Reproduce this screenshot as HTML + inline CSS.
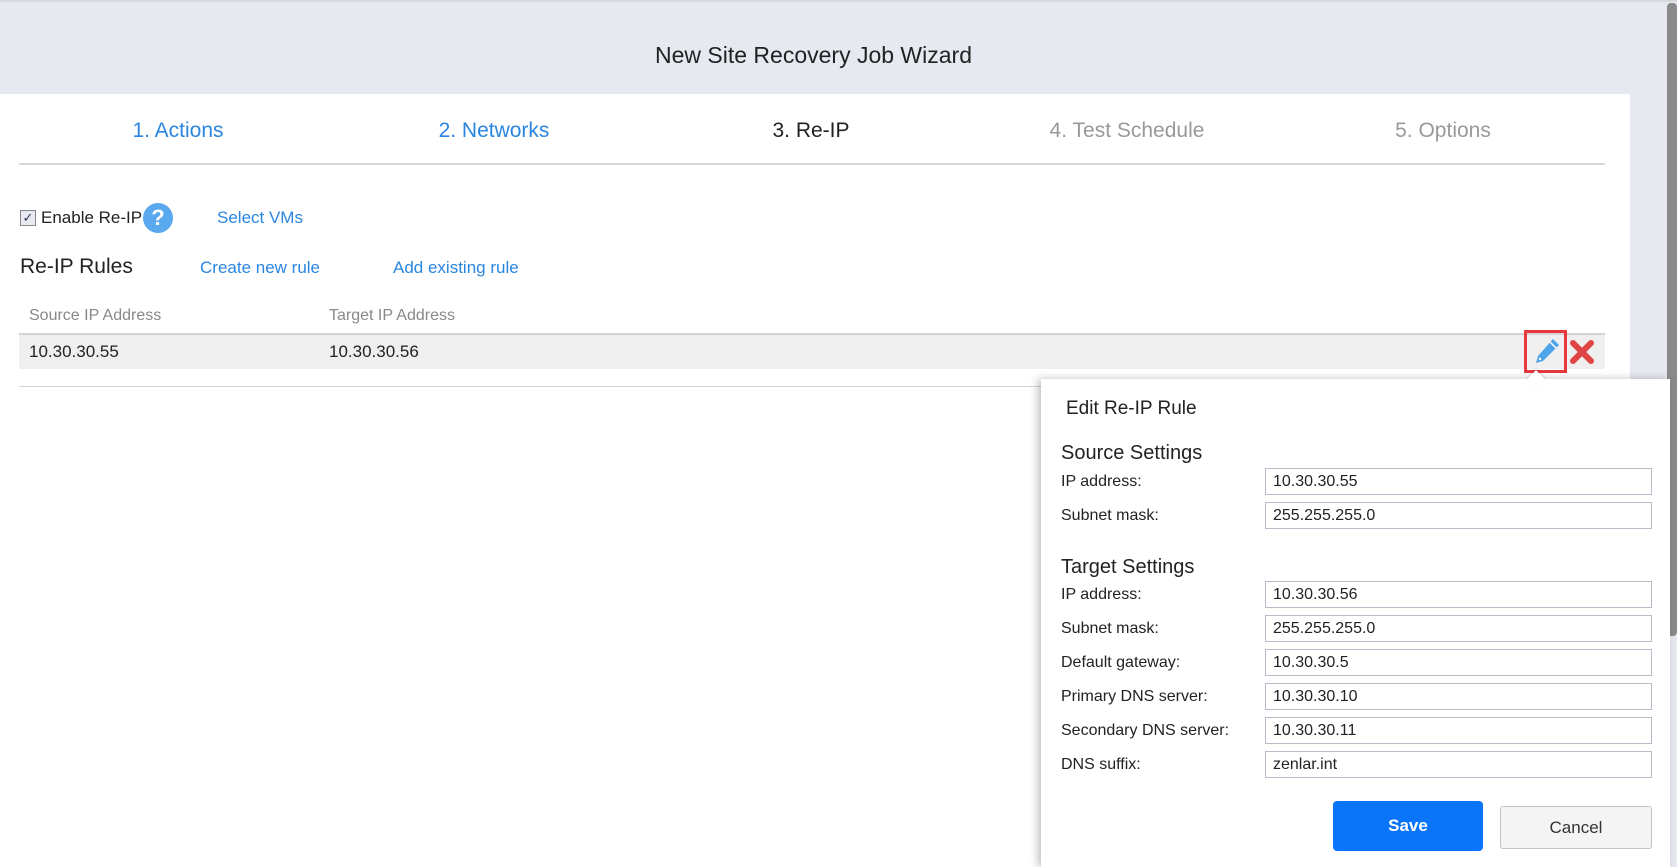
<!DOCTYPE html>
<html><head><meta charset="utf-8"><style>
*{margin:0;padding:0;box-sizing:border-box}
body{width:1677px;height:867px;overflow:hidden;background:#e6e9f0;font-family:"Liberation Sans",sans-serif;position:relative;color:#333}
.a{position:absolute;white-space:nowrap}
.blue{color:#2a86e0}
.inp{position:absolute;left:1265px;width:387px;height:27px;border:1px solid #b8bcc8;background:#fff;font-size:16px;padding:4px 0 0 7px;color:#222}
.lbl{position:absolute;left:1061px;font-size:16px;color:#222}
</style></head><body>
<div class="a" style="left:0;top:0;width:1677px;height:2px;background:#d6d8de"></div>
<div class="a" style="left:0;top:42px;width:1627px;text-align:center;font-size:23px;color:#222">New Site Recovery Job Wizard</div>
<div class="a" style="left:0;top:94px;width:1630px;height:773px;background:#fff"></div>
<div class="a" style="left:1667px;top:3px;width:10px;height:633px;background:#8a8a8a;border-radius:4px"></div>

<div class="a blue" style="left:78px;top:119px;width:200px;text-align:center;font-size:21px">1. Actions</div>
<div class="a blue" style="left:394px;top:119px;width:200px;text-align:center;font-size:21px">2. Networks</div>
<div class="a" style="left:711px;top:119px;width:200px;text-align:center;font-size:21px;color:#222">3. Re-IP</div>
<div class="a" style="left:1027px;top:119px;width:200px;text-align:center;font-size:21px;color:#999">4. Test Schedule</div>
<div class="a" style="left:1343px;top:119px;width:200px;text-align:center;font-size:21px;color:#999">5. Options</div>
<div class="a" style="left:19px;top:163px;width:1586px;height:2px;background:#d8d8d8"></div>

<div class="a" style="left:20px;top:210px;width:16px;height:16px;border:1px solid #888;background:#e8eaf2;font-size:13px;line-height:14px;text-align:center;color:#335">✓</div>
<div class="a" style="left:41px;top:208px;font-size:17px;color:#222">Enable Re-IP</div>
<div class="a" style="left:143px;top:203px;width:30px;height:30px;border-radius:50%;background:#5aa8ee;color:#fff;font-weight:bold;font-size:22px;text-align:center;line-height:30px">?</div>
<div class="a blue" style="left:217px;top:208px;font-size:17px">Select VMs</div>

<div class="a" style="left:20px;top:255px;font-size:21px;color:#222">Re-IP Rules</div>
<div class="a blue" style="left:200px;top:258px;font-size:17px">Create new rule</div>
<div class="a blue" style="left:393px;top:258px;font-size:17px">Add existing rule</div>

<div class="a" style="left:29px;top:307px;font-size:16px;color:#888">Source IP Address</div>
<div class="a" style="left:329px;top:307px;font-size:16px;color:#888">Target IP Address</div>
<div class="a" style="left:19px;top:333px;width:1586px;height:36px;background:#efefef;border-top:2px solid #d4d4d4"></div>
<div class="a" style="left:29px;top:342px;font-size:17px;color:#222">10.30.30.55</div>
<div class="a" style="left:329px;top:342px;font-size:17px;color:#222">10.30.30.56</div>
<div class="a" style="left:19px;top:386px;width:1030px;height:1px;background:#d4d4d4"></div>

<div class="a" style="left:1524px;top:330px;width:43px;height:43px;border:3px solid #e8383d"></div>
<svg class="a" style="left:1532px;top:336px" width="30" height="30" viewBox="0 0 30 30"><path d="M21 3 L27 9 L11 25 L4 27 L6 20 Z" fill="#4ea3ea"/><path d="M18 6 L24 12" stroke="#fff" stroke-width="1.5"/><circle cx="8" cy="23" r="1.2" fill="#fff"/></svg>
<svg class="a" style="left:1569px;top:339px" width="26" height="26" viewBox="0 0 26 26"><path d="M4 4 L22 22 M22 4 L4 22" stroke="#e04545" stroke-width="6" stroke-linecap="round"/></svg>

<div class="a" style="left:1041px;top:379px;width:629px;height:488px;background:#fff;box-shadow:-3px 0 8px rgba(0,0,0,.25)"></div>
<div class="a" style="left:1529px;top:373px;width:14px;height:14px;background:#fff;transform:rotate(45deg);box-shadow:-1px -1px 2px rgba(0,0,0,.15)"></div>
<div class="a" style="left:1066px;top:398px;font-size:19px;color:#222">Edit Re-IP Rule</div>
<div class="a" style="left:1061px;top:442px;font-size:20px;color:#222">Source Settings</div>
<div class="lbl" style="top:473px">IP address:</div><div class="inp" style="top:468px">10.30.30.55</div>
<div class="lbl" style="top:507px">Subnet mask:</div><div class="inp" style="top:502px">255.255.255.0</div>
<div class="a" style="left:1061px;top:556px;font-size:20px;color:#222">Target Settings</div>
<div class="lbl" style="top:586px">IP address:</div><div class="inp" style="top:581px">10.30.30.56</div>
<div class="lbl" style="top:620px">Subnet mask:</div><div class="inp" style="top:615px">255.255.255.0</div>
<div class="lbl" style="top:654px">Default gateway:</div><div class="inp" style="top:649px">10.30.30.5</div>
<div class="lbl" style="top:688px">Primary DNS server:</div><div class="inp" style="top:683px">10.30.30.10</div>
<div class="lbl" style="top:722px">Secondary DNS server:</div><div class="inp" style="top:717px">10.30.30.11</div>
<div class="lbl" style="top:756px">DNS suffix:</div><div class="inp" style="top:751px">zenlar.int</div>
<div class="a" style="left:1333px;top:801px;width:150px;height:50px;background:#0a75f8;border-radius:4px;color:#fff;font-weight:bold;font-size:17px;text-align:center;line-height:50px">Save</div>
<div class="a" style="left:1500px;top:806px;width:152px;height:43px;background:#f4f4f4;border:1px solid #c4c4c4;border-radius:3px;color:#333;font-size:17px;text-align:center;line-height:41px">Cancel</div>
</body></html>
